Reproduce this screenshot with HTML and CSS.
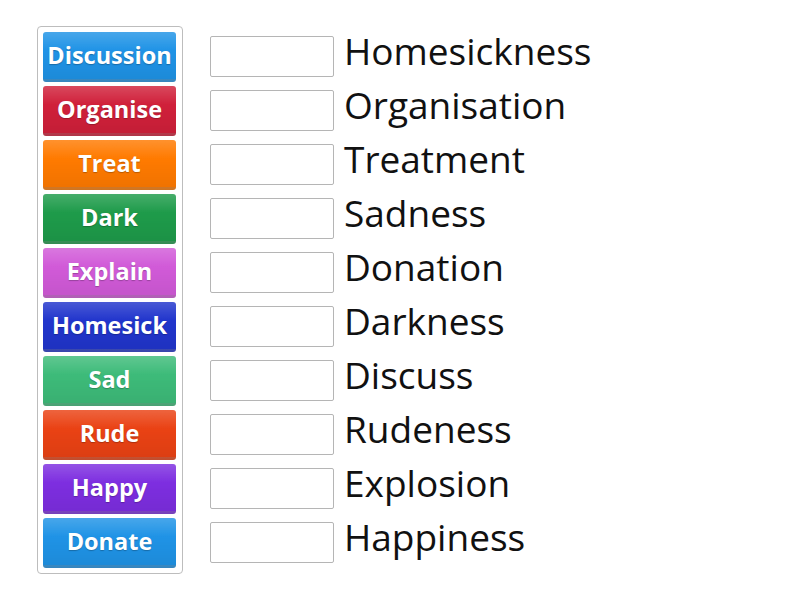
FILE: index.html
```html
<!DOCTYPE html>
<html lang="en">

<head>
    <meta charset="UTF-8">
    <meta name="viewport" content="width=device-width, initial-scale=1.0">
    <title>Match up</title>
    <link rel="stylesheet" href="styles.css">
</head>

<body>

<div class="board">
    <div class="tray">
        <div class="tile blue">Discussion</div>
        <div class="tile red">Organise</div>
        <div class="tile orange">Treat</div>
        <div class="tile green">Dark</div>
        <div class="tile pink">Explain</div>
        <div class="tile navy">Homesick</div>
        <div class="tile mint">Sad</div>
        <div class="tile rust">Rude</div>
        <div class="tile purple">Happy</div>
        <div class="tile blue">Donate</div>
    </div>

    <div class="targets">
        <div class="row"><div class="slot"></div><span class="word">Homesickness</span></div>
        <div class="row"><div class="slot"></div><span class="word">Organisation</span></div>
        <div class="row"><div class="slot"></div><span class="word">Treatment</span></div>
        <div class="row"><div class="slot"></div><span class="word">Sadness</span></div>
        <div class="row"><div class="slot"></div><span class="word">Donation</span></div>
        <div class="row"><div class="slot"></div><span class="word">Darkness</span></div>
        <div class="row"><div class="slot"></div><span class="word">Discuss</span></div>
        <div class="row"><div class="slot"></div><span class="word">Rudeness</span></div>
        <div class="row"><div class="slot"></div><span class="word">Explosion</span></div>
        <div class="row"><div class="slot"></div><span class="word">Happiness</span></div>
    </div>
</div>

</body>

</html>
```

FILE: styles.css
```css
html, body {
    margin: 0;
    background: #fff;
    font-family: "Open Sans", "DejaVu Sans", sans-serif;
}

.board {
    display: flex;
    align-items: flex-start;
    padding: 26px 0 0 37px;
}

.tray {
    display: flex;
    flex-direction: column;
    gap: 4px;
    padding: 5px 6px 5px 5px;
    border: 1px solid #bdbdbd;
    border-radius: 4px;
}

.tile {
    width: 133px;
    height: 45px;
    padding-bottom: 2px;
    box-sizing: content-box;
    border-bottom: 3px solid rgba(0, 0, 0, 0.18);
    border-radius: 3px;
    display: flex;
    align-items: center;
    justify-content: center;
    color: #fff;
    font-weight: bold;
    font-size: 23.5px;
    text-shadow: 0 1px 1px rgba(0, 0, 0, 0.25);
    background-image: linear-gradient(rgba(255, 255, 255, 0.18), rgba(255, 255, 255, 0) 40%, rgba(0, 0, 0, 0.06));
}

.blue { background-color: #1f93e6; }
.red { background-color: #d0203a; }
.orange { background-color: #ff7a00; }
.green { background-color: #1e9b4a; }
.pink { background-color: #d15ad8; }
.navy { background-color: #2135cc; }
.mint { background-color: #3dbb79; }
.rust { background-color: #ea4214; }
.purple { background-color: #7d2ee0; }

.targets {
    display: flex;
    flex-direction: column;
    gap: 14px;
    margin-left: 27px;
    padding-top: 10px;
}

.row {
    display: flex;
    align-items: flex-start;
    height: 40px;
}

.slot {
    width: 122px;
    height: 39px;
    border: 1px solid #b5b5b5;
    border-radius: 2px;
}

.word {
    margin-left: 10px;
    font-size: 37px;
    line-height: 30px;
    color: #111;
    white-space: nowrap;
}
```
